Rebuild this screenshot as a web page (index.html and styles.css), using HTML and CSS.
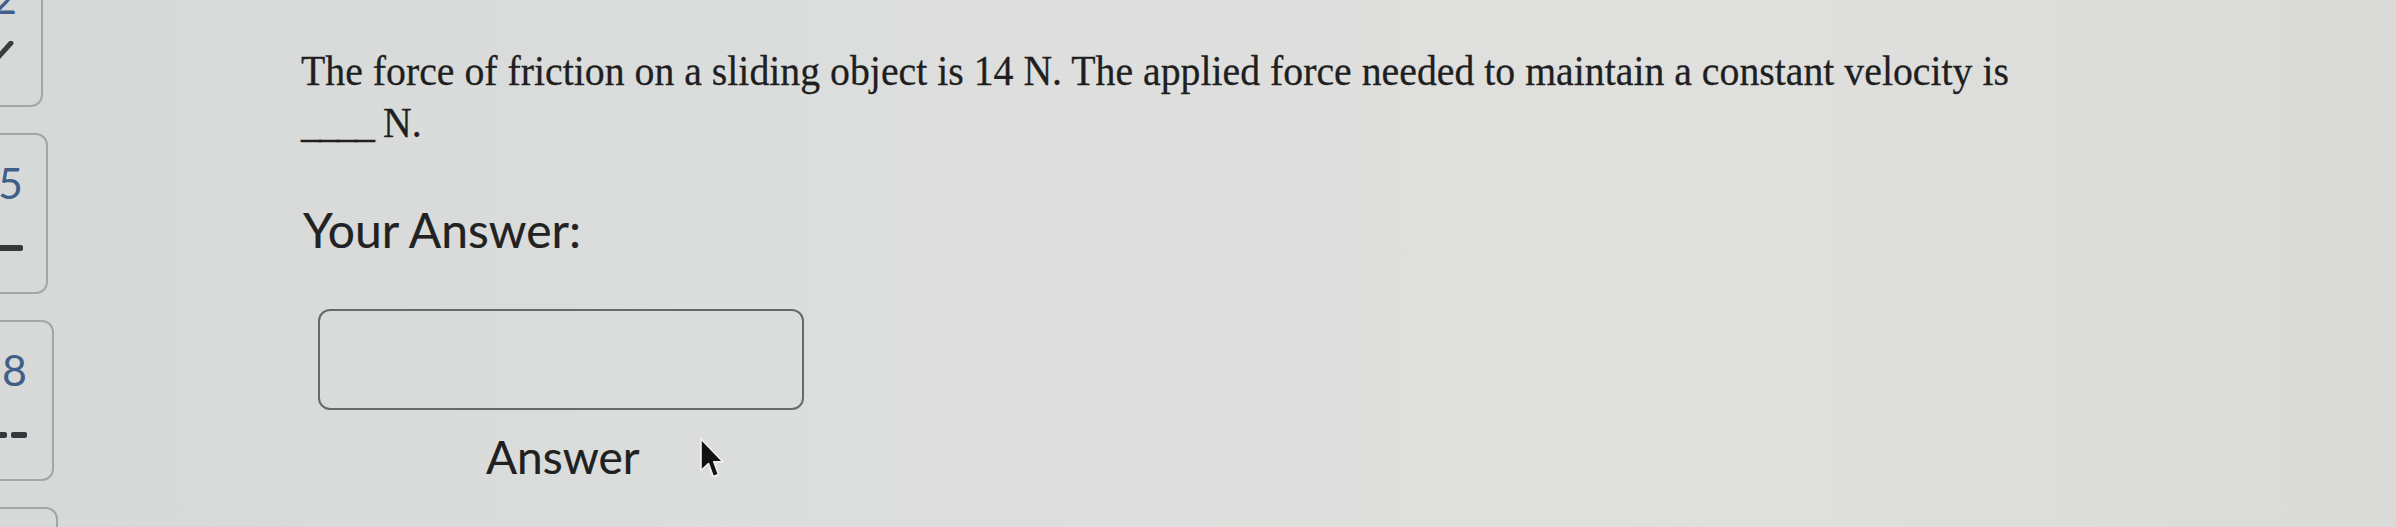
FILE: index.html
```html
<!DOCTYPE html>
<html lang="en">
<head>
<meta charset="utf-8">
<title>Quiz question</title>
<link rel="stylesheet" href="styles.css">
</head>
<body>
<div class="page">
  <nav class="sidebar">
    <div class="card card-1">
      <span class="num">2</span>
      <span class="mark check">
        <svg width="20" height="24" viewBox="0 0 20 24"><path d="M-4 22 L14 2" stroke="#3a3d40" stroke-width="5" stroke-linecap="round" fill="none"/></svg>
      </span>
    </div>
    <div class="card card-2">
      <span class="num">5</span>
      <span class="mark"><span class="dash"></span></span>
    </div>
    <div class="card card-3">
      <span class="num">18</span>
      <span class="mark"><span class="dash short"></span><span class="dash"></span></span>
    </div>
    <div class="card card-4"></div>
  </nav>
  <main class="main">
    <p class="question">The force of friction on a sliding object is 14 N. The applied force needed to maintain a constant velocity is <span class="blank">____</span> N.</p>
    <h2 class="label">Your Answer:</h2>
    <div class="answer-box"></div>
    <div class="answer-row">
      <span class="answer-text">Answer</span>
      <svg class="pointer" width="26" height="42" viewBox="0 0 26 42">
        <path d="M2 1 L2 32.5 L9.5 25.5 L14.2 38.5 L19.5 36.5 L14.8 23.8 L23.8 23.8 Z" fill="#111" stroke="#f2f2f2" stroke-width="1.6" stroke-linejoin="round"/>
      </svg>
    </div>
  </main>
</div>
</body>
</html>
```
FILE: styles.css
```css
* { box-sizing: border-box; }
html, body {
  margin: 0;
  padding: 0;
  width: 2396px;
  height: 527px;
  overflow: hidden;
}
body {
  background: linear-gradient(90deg, #d7d9d8 0%, #dcdedd 35%, #e0e0de 70%, #dadad8 100%);
  color: #2a2a2a;
}
.page {
  display: flex;
  height: 527px;
  overflow: hidden;
}
.sidebar {
  display: flex;
  flex-direction: column;
  gap: 26px;
  margin-top: -54px;
  margin-left: -40px;
  width: 100px;
  height: 581px;
  overflow: hidden;
  flex: none;
}
.card {
  flex: none;
  height: 161px;
  border: 2px solid #a3a6a8;
  border-radius: 12px;
  display: flex;
  flex-direction: column;
  align-items: flex-end;
  padding: 24px 23px 0 0;
  font-family: Lato, "Open Sans", sans-serif;
}
.card-1 { width: 83px; padding-right: 24px; padding-top: 26px; }
.card-2 { width: 88px; }
.card-3 { width: 94px; padding-right: 25px; }
.card-4 { width: 98px; }
.num {
  font-size: 43px;
  line-height: 48px;
  color: #3f5f88;
}
.mark {
  margin-top: 26px;
  height: 30px;
  display: flex;
  align-items: center;
  gap: 4px;
}
.check { margin-top: 16px; margin-right: 0; }
.dash {
  display: block;
  width: 26px;
  height: 6px;
  background: #35383b;
  border-radius: 2px;
}
.card-3 .dash { width: 16px; }
.card-3 .dash.short { width: 12px; }
.main {
  padding-left: 241px;
  font-family: Lato, "Open Sans", sans-serif;
}
.question {
  margin: 45px 0 0 0;
  width: 1900px;
  font-family: "Liberation Serif", "Times New Roman", serif;
  font-size: 43px;
  line-height: 52px;
  color: #1f1f1f;
  transform: scaleX(0.925);
  transform-origin: left top;
  -webkit-text-stroke: 0.3px #1f1f1f;
}
.blank { letter-spacing: -2px; }
.label {
  margin: 53px 0 0 2px;
  font-size: 48px;
  line-height: 56px;
  font-weight: 400;
  color: #222;
  -webkit-text-stroke: 0.2px #222;
}
.answer-box {
  margin: 51px 0 0 17px;
  width: 486px;
  height: 101px;
  border: 2px solid #666a6d;
  border-radius: 12px;
}
.answer-row {
  display: flex;
  align-items: flex-start;
  margin: 20px 0 0 185px;
}
.answer-text {
  font-size: 46px;
  line-height: 53px;
  color: #202020;
  -webkit-text-stroke: 0.2px #202020;
}
.pointer {
  margin: 8px 0 0 60px;
}
```
